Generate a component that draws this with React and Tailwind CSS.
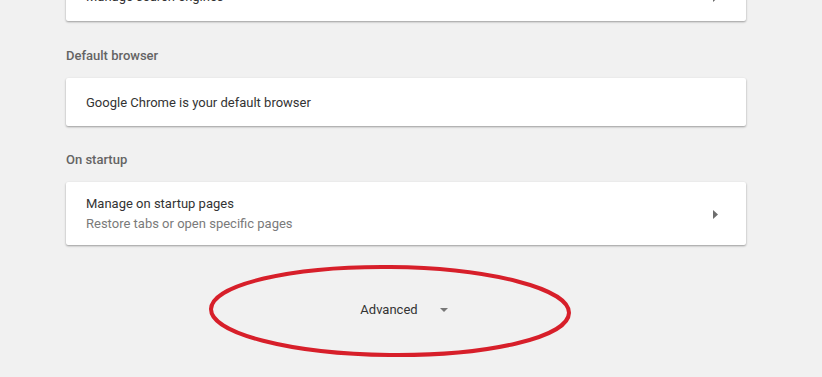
import React from "react";

const Caret = ({ dir = "right" }) =>
  dir === "right" ? (
    <svg width="5" height="9" viewBox="0 0 5 9" className="text-[#6e6e6e]">
      <path d="M0 0 L5 4.5 L0 9 Z" fill="currentColor" />
    </svg>
  ) : (
    <svg width="8" height="4" viewBox="0 0 8 4" className="text-[#777]">
      <path d="M0 0 L8 0 L4 4 Z" fill="currentColor" />
    </svg>
  );

const Card = ({ children, className = "" }) => (
  <div
    className={
      "bg-white rounded-[2px] shadow-[0_1px_2px_rgba(0,0,0,0.28),0_1px_3px_rgba(0,0,0,0.1)] " +
      className
    }
  >
    {children}
  </div>
);

const Heading = ({ children, h }) => (
  <div className={"flex items-end pb-[12px] " + h}>
    <span className="text-[13px] leading-5 font-medium text-[#646464]">{children}</span>
  </div>
);

export default function App() {
  return (
    <div
      className="relative w-[822px] h-[377px] overflow-hidden bg-[#f1f1f1]"
      style={{ fontFamily: "Roboto, 'Liberation Sans', sans-serif" }}
    >
      <div className="ml-[66px] w-[680px]">
        {/* Search engines (cut off by the screenshot) */}
        <Card className="mt-[-27px] h-12 flex items-center justify-between pl-5 pr-[28px]">
          <span className="text-[13px] text-[#333]">Manage search engines</span>
          <Caret />
        </Card>

        <Heading h="h-[57px]">Default browser</Heading>
        <Card className="h-12 flex items-center pl-5 pt-[1px]">
          <span className="text-[13px] text-[#333]">Google Chrome is your default browser</span>
        </Card>

        <Heading h="h-[56px]">On startup</Heading>
        <Card className="flex items-center justify-between pl-5 pr-[28px] pt-[12px] pb-[11px]">
          <div className="flex flex-col">
            <span className="text-[13px] leading-5 text-[#333]">Manage on startup pages</span>
            <span className="text-[13px] leading-5 text-[#7a7a7a]">Restore tabs or open specific pages</span>
          </div>
          <Caret />
        </Card>

        {/* Advanced */}
        <div className="flex justify-center pt-[55px]">
          <div className="flex items-center gap-[22px] mr-[4px]">
            <span className="text-[13px] leading-5 text-[#333]">Advanced</span>
            <Caret dir="down" />
          </div>
        </div>
      </div>

      {/* Red hand-drawn ellipse */}
      <svg
        className="absolute left-[206px] top-[263px] pointer-events-none"
        width="368"
        height="98"
        viewBox="0 0 368 98"
      >
        <ellipse
          cx="184"
          cy="48"
          rx="179"
          ry="44"
          fill="none"
          stroke="#d71f2a"
          strokeWidth="4"
          transform="rotate(0.6 184 48)"
        />
      </svg>
    </div>
  );
}
